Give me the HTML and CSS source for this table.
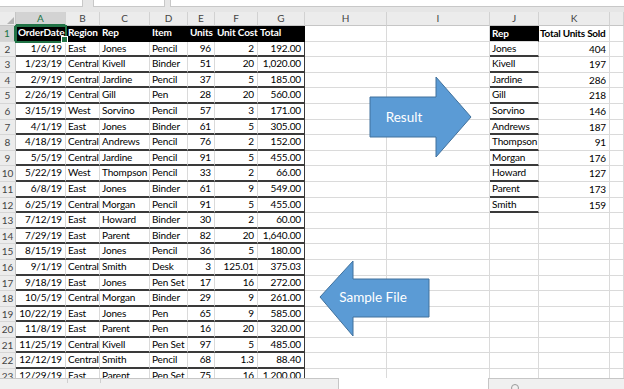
FILE: index.html
```html
<!DOCTYPE html>
<html>
<head>
<meta charset="utf-8">
<link rel="stylesheet" href="styles.css">
</head>
<body>
<div class="top"><div class="box b1"></div><div class="box b2"></div><div class="box b3"></div></div>
<div class="sheet">
  <div class="hd"><span class="corner"><svg width="7" height="7" viewBox="0 0 7 7"><polygon points="7,0 7,7 0,7" fill="#b3b3b3"/></svg></span><span class="on">A</span><span>B</span><span>C</span><span>D</span><span>E</span><span>F</span><span>G</span><span>H</span><span>I</span><span>J</span><span>K</span><span></span></div>
  <div class="r t t1"><i>1</i><span class="sel">OrderDate</span><span>Region</span><span>Rep</span><span>Item</span><span>Units</span><span>Unit Cost</span><span>Total</span><span></span><span></span><span>Rep</span><span>Total Units Sold</span><span></span></div>
  <div class="r t k"><i>2</i><span>1/6/19</span><span>East</span><span>Jones</span><span>Pencil</span><span>96</span><span>2</span><span>192.00</span><span></span><span></span><span>Jones</span><span>404</span><span></span></div>
  <div class="r t k"><i>3</i><span>1/23/19</span><span>Central</span><span>Kivell</span><span>Binder</span><span>51</span><span>20</span><span>1,020.00</span><span></span><span></span><span>Kivell</span><span>197</span><span></span></div>
  <div class="r t k"><i>4</i><span>2/9/19</span><span>Central</span><span>Jardine</span><span>Pencil</span><span>37</span><span>5</span><span>185.00</span><span></span><span></span><span>Jardine</span><span>286</span><span></span></div>
  <div class="r t k"><i>5</i><span>2/26/19</span><span>Central</span><span>Gill</span><span>Pen</span><span>28</span><span>20</span><span>560.00</span><span></span><span></span><span>Gill</span><span>218</span><span></span></div>
  <div class="r t k"><i>6</i><span>3/15/19</span><span>West</span><span>Sorvino</span><span>Pencil</span><span>57</span><span>3</span><span>171.00</span><span></span><span></span><span>Sorvino</span><span>146</span><span></span></div>
  <div class="r t k"><i>7</i><span>4/1/19</span><span>East</span><span>Jones</span><span>Binder</span><span>61</span><span>5</span><span>305.00</span><span></span><span></span><span>Andrews</span><span>187</span><span></span></div>
  <div class="r t k"><i>8</i><span>4/18/19</span><span>Central</span><span>Andrews</span><span>Pencil</span><span>76</span><span>2</span><span>152.00</span><span></span><span></span><span>Thompson</span><span>91</span><span></span></div>
  <div class="r t k"><i>9</i><span>5/5/19</span><span>Central</span><span>Jardine</span><span>Pencil</span><span>91</span><span>5</span><span>455.00</span><span></span><span></span><span>Morgan</span><span>176</span><span></span></div>
  <div class="r t k"><i>10</i><span>5/22/19</span><span>West</span><span>Thompson</span><span>Pencil</span><span>33</span><span>2</span><span>66.00</span><span></span><span></span><span>Howard</span><span>127</span><span></span></div>
  <div class="r t k"><i>11</i><span>6/8/19</span><span>East</span><span>Jones</span><span>Binder</span><span>61</span><span>9</span><span>549.00</span><span></span><span></span><span>Parent</span><span>173</span><span></span></div>
  <div class="r t k"><i>12</i><span>6/25/19</span><span>Central</span><span>Morgan</span><span>Pencil</span><span>91</span><span>5</span><span>455.00</span><span></span><span></span><span>Smith</span><span>159</span><span></span></div>
  <div class="r t"><i>13</i><span>7/12/19</span><span>East</span><span>Howard</span><span>Binder</span><span>30</span><span>2</span><span>60.00</span><span></span><span></span><span></span><span></span><span></span></div>
  <div class="r t"><i>14</i><span>7/29/19</span><span>East</span><span>Parent</span><span>Binder</span><span>82</span><span>20</span><span>1,640.00</span><span></span><span></span><span></span><span></span><span></span></div>
  <div class="r t"><i>15</i><span>8/15/19</span><span>East</span><span>Jones</span><span>Pencil</span><span>36</span><span>5</span><span>180.00</span><span></span><span></span><span></span><span></span><span></span></div>
  <div class="r t"><i>16</i><span>9/1/19</span><span>Central</span><span>Smith</span><span>Desk</span><span>3</span><span>125.01</span><span>375.03</span><span></span><span></span><span></span><span></span><span></span></div>
  <div class="r t"><i>17</i><span>9/18/19</span><span>East</span><span>Jones</span><span>Pen Set</span><span>17</span><span>16</span><span>272.00</span><span></span><span></span><span></span><span></span><span></span></div>
  <div class="r t"><i>18</i><span>10/5/19</span><span>Central</span><span>Morgan</span><span>Binder</span><span>29</span><span>9</span><span>261.00</span><span></span><span></span><span></span><span></span><span></span></div>
  <div class="r t"><i>19</i><span>10/22/19</span><span>East</span><span>Jones</span><span>Pen</span><span>65</span><span>9</span><span>585.00</span><span></span><span></span><span></span><span></span><span></span></div>
  <div class="r t"><i>20</i><span>11/8/19</span><span>East</span><span>Parent</span><span>Pen</span><span>16</span><span>20</span><span>320.00</span><span></span><span></span><span></span><span></span><span></span></div>
  <div class="r t"><i>21</i><span>11/25/19</span><span>Central</span><span>Kivell</span><span>Pen Set</span><span>97</span><span>5</span><span>485.00</span><span></span><span></span><span></span><span></span><span></span></div>
  <div class="r t"><i>22</i><span>12/12/19</span><span>Central</span><span>Smith</span><span>Pencil</span><span>68</span><span>1.3</span><span>88.40</span><span></span><span></span><span></span><span></span><span></span></div>
  <div class="r t"><i>23</i><span>12/29/19</span><span>East</span><span>Parent</span><span>Pen Set</span><span>75</span><span>16</span><span>1,200.00</span><span></span><span></span><span></span><span></span><span></span></div>
</div>
<div class="bot">
  <div class="tabs"><span class="tab t-a"></span><span class="tab t-b"></span><span class="tab t-c"></span></div>
  <div class="gap"></div>
  <div class="scroll"><span class="knob"></span></div>
</div>
<svg class="arrows" width="624" height="389" viewBox="0 0 624 389">
  <polygon points="370,97 436,97 436,77 471,117 436,157 436,137 370,137" fill="#5b9bd5" stroke="#41719c" stroke-width="1"/>
  <text x="404" y="122" class="atext" text-anchor="middle">Result</text>
  <polygon points="320,297 353,261 353,279 429,279 429,317 353,317 353,336" fill="#5b9bd5" stroke="#41719c" stroke-width="1"/>
  <text x="373" y="302" class="atext" text-anchor="middle">Sample File</text>
</svg>
</body>
</html>
```

FILE: styles.css
```css
* { box-sizing: border-box; margin: 0; padding: 0; }
body {
  width: 624px;
  height: 389px;
  overflow: hidden;
  background: #fff;
  position: relative;
  font-family: Lato, "Liberation Sans", sans-serif;
}
.top {
  height: 12px;
  background: #e6e6e6;
  display: flex;
  gap: 10px;
}
.box {
  height: 7px;
  background: #fff;
  border: 1px solid #c8c8c8;
  border-top: none;
}
.b1 { width: 83px; border-left: none; }
.b2 { width: 72px; }
.b3 { flex: 1; margin-left: -5px; border-right: none; }

.sheet {
  height: 366px;
  overflow: hidden;
}
.hd, .r {
  display: grid;
  grid-template-columns: 16px 50px 34px 50px 38px 27px 43px 47px 82px 103px 49px 71px 1fr;
}
.hd {
  height: 14px;
  background: #ececec;
}
.hd > span {
  border-right: 1px solid #d2d2d2;
  border-bottom: 1px solid #c6c6c6;
  font-family: Lato, "Liberation Sans", sans-serif;
  font-size: 10px;
  color: #444;
  text-align: center;
  line-height: 13px;
}
.hd > .corner {
  display: flex;
  align-items: flex-end;
  justify-content: flex-end;
  padding: 0 1px 1px 0;
  border-right-color: #c6c6c6;
}
.hd > .corner svg { display: block; }
.hd > .on {
  background: #d3d3d3;
  color: #217346;
  border-bottom: 2px solid #217346;
  line-height: 12px;
}
.r { height: 15.6px; }
.r > * {
  border-right: 1px solid #dadada;
  border-bottom: 1px solid #dadada;
  padding: 0 0 0 2px;
  font-size: 10px;
  letter-spacing: -0.15px;
  line-height: 14.6px;
  white-space: nowrap;
  overflow: hidden;
  color: #000;
}
.r > i {
  font-style: normal;
  background: #ececec;
  color: #444;
  text-align: center;
  font-size: 10px;
  letter-spacing: 0;
  padding: 0;
  border-right-color: #c6c6c6;
  border-bottom-color: #d6d6d6;
}
.t > :nth-child(n+2):nth-child(-n+8) {
  border-bottom: 2px solid #3a3a3a;
  line-height: 13.6px;
}
.t > :nth-child(8) { border-right: 1px solid #3a3a3a; }
.t > :nth-child(2),
.t > :nth-child(6),
.t > :nth-child(7),
.t > :nth-child(8) { text-align: right; padding: 0 3px 0 0; }

.t1 > :nth-child(n+2):nth-child(-n+8) {
  background: #000;
  color: #fff;
  font-weight: 700;
  text-align: left;
  border-right-color: #000;
  border-bottom-color: #000;
  overflow: visible;
  padding: 0 0 0 2px;
}
.t1 > :nth-child(8) { border-right-color: #3a3a3a; }
.t1 > i {
  background: #d3d3d3;
  color: #217346;
  border-right: 2px solid #217346;
}
.t1 > :nth-child(11) {
  background: #000;
  color: #fff;
  font-weight: 700;
  border-right-color: #000;
}
.t1 > :nth-child(12) { font-weight: 700; letter-spacing: -0.25px; padding: 0 0 0 1px; }

.t1 > .sel {
  position: relative;
  outline: 2px solid #217346;
  outline-offset: -1px;
}
.t1 > .sel::after {
  content: "";
  position: absolute;
  right: -3px;
  bottom: -3px;
  width: 5px;
  height: 5px;
  background: #217346;
  border: 1px solid #fff;
}

.k > :nth-child(11) {
  border-bottom: 2px solid #3a3a3a;
  line-height: 13.6px;
}
.k > :nth-child(12) { text-align: right; padding: 0 3px 0 0; }

.bot {
  height: 11px;
  display: flex;
  background: #fff;
  overflow: hidden;
}
.tabs {
  width: 339px;
  display: flex;
  background: #f0f0f0;
  border-top: 1px solid #c6c6c6;
  border-right: 1px solid #c6c6c6;
}
.tab { border-right: 1px solid #cfcfcf; height: 4px; }
.t-a { width: 68px; }
.t-b { width: 33px; }
.t-c { flex: 1; border-right: none; }
.gap { width: 149px; }
.scroll {
  flex: 1;
  background: #f0f0f0;
  border-top: 1px solid #c6c6c6;
  border-left: 1px solid #c6c6c6;
  padding: 5px 0 0 22px;
}
.knob {
  display: block;
  width: 8px;
  height: 8px;
  border: 1px solid #9a9a9a;
  border-radius: 50%;
}
.arrows {
  position: absolute;
  left: 0;
  top: 0;
  pointer-events: none;
}
.atext {
  font-family: Lato, "Liberation Sans", sans-serif;
  font-size: 13.5px;
  fill: #fff;
}
```
